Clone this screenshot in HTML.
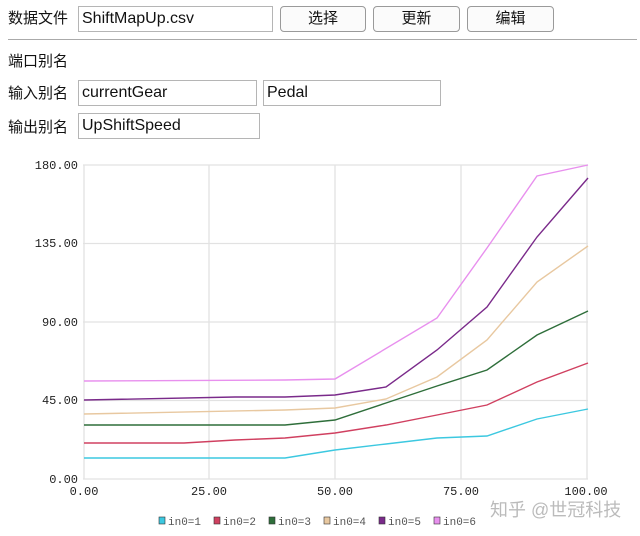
<!DOCTYPE html>
<html><head><meta charset="utf-8"><style>
body{margin:0;width:640px;height:536px;background:#fff;font-family:"Liberation Sans","Noto Sans CJK SC",sans-serif;position:relative;overflow:hidden;color:#111}
.a{position:absolute}
.lbl{font-size:15px;line-height:20px}
.in{position:absolute;border:1px solid #b5b5b5;background:#fff;font-size:16px;line-height:24px;padding-left:3px;box-sizing:border-box;height:26px}
.btn{position:absolute;border:1px solid #9a9a9a;border-radius:4px;background:#fbfbfb;font-size:15px;text-align:center;line-height:24px;height:26px;box-sizing:border-box}
</style></head><body>
<div class="a lbl" style="left:8px;top:9px">数据文件</div>
<div class="in" style="left:78px;top:6px;width:195px">ShiftMapUp.csv</div>
<div class="btn" style="left:280px;top:6px;width:86px">选择</div>
<div class="btn" style="left:373px;top:6px;width:87px">更新</div>
<div class="btn" style="left:467px;top:6px;width:87px">编辑</div>
<div class="a" style="left:8px;top:39px;width:629px;height:1px;background:#aaa"></div>
<div class="a lbl" style="left:8px;top:52px">端口别名</div>
<div class="a lbl" style="left:8px;top:84px">输入别名</div>
<div class="in" style="left:78px;top:80px;width:179px">currentGear</div>
<div class="in" style="left:263px;top:80px;width:178px">Pedal</div>
<div class="a lbl" style="left:8px;top:118px">输出别名</div>
<div class="in" style="left:78px;top:113px;width:182px">UpShiftSpeed</div>
<svg class="a" style="left:0;top:0" width="640" height="536" font-family="Liberation Mono, monospace" font-size="12" fill="#222">
<g stroke="#e2e2e2" stroke-width="1.3">
<line x1="83" y1="165" x2="588" y2="165"/><line x1="83" y1="243.5" x2="588" y2="243.5"/><line x1="83" y1="322" x2="588" y2="322"/><line x1="83" y1="400.5" x2="588" y2="400.5"/><line x1="83" y1="479" x2="588" y2="479"/>
<line x1="84" y1="165" x2="84" y2="479"/><line x1="209" y1="165" x2="209" y2="479"/><line x1="335" y1="165" x2="335" y2="479"/><line x1="461" y1="165" x2="461" y2="479"/><line x1="587" y1="165" x2="587" y2="479"/>
</g>
<g text-anchor="end"><text x="78" y="169">180.00</text><text x="78" y="247">135.00</text><text x="78" y="326">90.00</text><text x="78" y="404">45.00</text><text x="78" y="483">0.00</text></g>
<g text-anchor="middle"><text x="84" y="495">0.00</text><text x="209" y="495">25.00</text><text x="335" y="495">50.00</text><text x="461" y="495">75.00</text><text x="586" y="495">100.00</text></g>
<g fill="none" stroke-width="1.4">
<polyline stroke="#3cc8e0" points="84,458 285,458 335,450 386,444 437,438 487,436 537,419 588,409"/>
<polyline stroke="#d04060" points="84,443 184,443 235,440 285,438 335,433 386,425 437,415 487,405 537,382 588,363"/>
<polyline stroke="#2e6e3a" points="84,425 285,425 335,420 386,403 437,386 487,370 537,335 588,311"/>
<polyline stroke="#e8c8a0" points="84,414 285,410 335,408 386,399 437,377 487,340 537,282 588,246"/>
<polyline stroke="#7a2a8a" points="84,400 235,397 285,397 335,395 386,387 437,350 487,307 537,237 588,178"/>
<polyline stroke="#e890ee" points="84,381 285,380 335,379 437,318 487,248 537,176 588,165"/>
</g>
<g font-size="11" fill="#555">
<rect x="159" y="517" width="6" height="7" fill="#3cc8e0" stroke="#333" stroke-width=".6"/><text x="168" y="525">in0=1</text>
<rect x="214" y="517" width="6" height="7" fill="#d04060" stroke="#333" stroke-width=".6"/><text x="223" y="525">in0=2</text>
<rect x="269" y="517" width="6" height="7" fill="#2e6e3a" stroke="#333" stroke-width=".6"/><text x="278" y="525">in0=3</text>
<rect x="324" y="517" width="6" height="7" fill="#e8c8a0" stroke="#333" stroke-width=".6"/><text x="333" y="525">in0=4</text>
<rect x="379" y="517" width="6" height="7" fill="#7a2a8a" stroke="#333" stroke-width=".6"/><text x="388" y="525">in0=5</text>
<rect x="434" y="517" width="6" height="7" fill="#e890ee" stroke="#333" stroke-width=".6"/><text x="443" y="525">in0=6</text>
</g>
<text x="490" y="516" font-family="Liberation Sans, Noto Sans CJK SC, sans-serif" font-size="18" fill="#bbb">知乎 @世冠科技</text>
</svg>
</body></html>
